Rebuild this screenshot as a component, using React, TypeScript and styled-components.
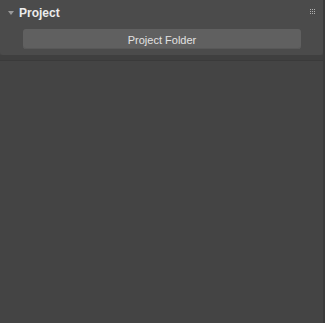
import React from 'react'
import styled, { createGlobalStyle } from 'styled-components'

const GlobalStyle = createGlobalStyle`
  html, body {
    margin: 0;
    padding: 0;
    background: #444444;
  }

  body {
    font-family: 'Liberation Sans', Arial, sans-serif;
  }
`

const Frame = styled.div`
  display: flex;
  flex-direction: column;
  width: 325px;
  height: 323px;
  background: #444444;
  border-right: 2px solid #3a3a3a;
  box-sizing: border-box;
`

const Panel = styled.section`
  display: flex;
  flex-direction: column;
  gap: 8px;
  height: 55px;
  padding: 5px 8px 0 6px;
  box-sizing: border-box;
  background: #4b4b4b;
  border-radius: 0 0 3px 3px;
`

const Header = styled.div`
  display: flex;
  align-items: center;
  gap: 5px;
  height: 16px;
`

const Caret = styled.span`
  width: 0;
  height: 0;
  margin-left: 2px;
  border-left: 3px solid transparent;
  border-right: 3px solid transparent;
  border-top: 4px solid #9a9a9a;
`

const Title = styled.h2`
  flex: 1;
  margin: 0;
  font-size: 12px;
  font-weight: 700;
  color: #ececec;
`

const Grip = styled.div`
  display: grid;
  grid-template-columns: repeat(3, 1px);
  gap: 1px;
  margin-top: -3px;

  span {
    width: 1px;
    height: 1px;
    background: #b0b0b0;
  }
`

const Body = styled.div`
  padding: 0 14px 0 17px;
`

const FolderButton = styled.button`
  width: 100%;
  height: 20px;
  padding: 1px 0 0;
  border: none;
  border-radius: 3px;
  background: #606060;
  box-shadow: inset 0 -1px 0 #585858;
  color: #e2e2e2;
  font-family: 'Liberation Sans', Arial, sans-serif;
  font-size: 11px;
`

const Divider = styled.div`
  height: 5px;
  background: #3f3f3f;
  border-bottom: 1px solid #3a3a3a;
`

const Fill = styled.div`
  flex: 1;
  background: #444444;
`

export default function App() {
  return (
    <>
      <GlobalStyle />
      <Frame>
        <Panel>
          <Header>
            <Caret />
            <Title>Project</Title>
            <Grip>
              {Array.from({ length: 9 }).map((_, i) => (
                <span key={i} />
              ))}
            </Grip>
          </Header>
          <Body>
            <FolderButton>Project Folder</FolderButton>
          </Body>
        </Panel>
        <Divider />
        <Fill />
      </Frame>
    </>
  )
}
